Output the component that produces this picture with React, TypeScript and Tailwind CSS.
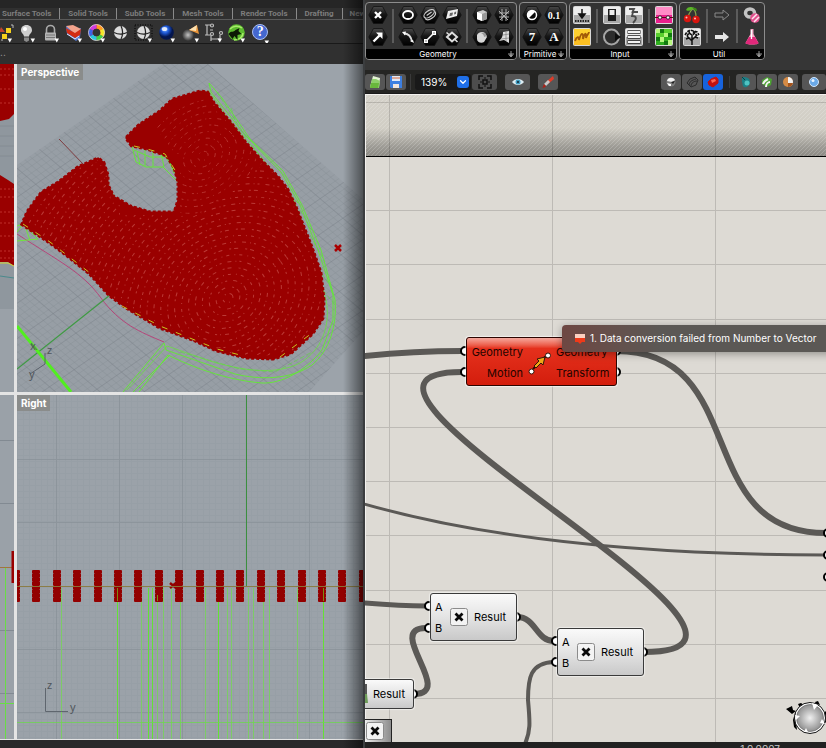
import type { ReactNode } from 'react';
import { ChevronDown } from 'lucide-react';

const tabs = [
  'Surface Tools',
  'Solid Tools',
  'SubD Tools',
  'Mesh Tools',
  'Render Tools',
  'Drafting',
  'New',
];

function Flyout() {
  return <path d="M14.500 16.500h4.500l-2.200 4z" fill="#fff" />;
}

const rhinoTools: { name: string; icon: ReactNode }[] = [
  {
    name: 'Group',
    icon: (
      <>
        <path d="M8 5l4 5H6z" fill="#c2452d" />
        <rect x="13" y="6" width="5" height="5" fill="#f7d21c" />
        <rect x="9" y="12" width="5" height="5" fill="#f7d21c" />
        <path d="M18 3h2v3M9 19v-2" stroke="#bbb" fill="none" />
      </>
    ),
  },
  {
    name: 'Hide objects',
    icon: (
      <>
        <path
          d="M10.500 3c3.600 0 5.500 2.500 5.500 5.200 0 2.700-2.800 3.600-3 6.300H8c-.2-2.700-3-3.600-3-6.300C5 5.500 7 3 10.500 3z"
          fill="#cfcfcf"
        />
        <circle cx="9" cy="7" r="2" fill="#fff" />
        <path d="M8 15.500h5v3l-2.500 1.500L8 18.500z" fill="#8c8c8c" />
      </>
    ),
  },
  {
    name: 'Lock objects',
    icon: (
      <>
        <path d="M6.500 11V7.500a4 4 0 018 0V11" fill="none" stroke="#aaa" strokeWidth="1.600" />
        <rect x="5" y="10.500" width="11" height="8" rx="1" fill="#b5b5b5" />
        <path d="M6 13h9M6 15.500h9" stroke="#777" />
      </>
    ),
  },
  {
    name: 'Layers',
    icon: (
      <>
        <path d="M3 4l8 4 7-2-1 10-4 3-9-7z" fill="#4f76cf" />
        <path d="M3 4l7-1 8 4-6 5z" fill="#f3a38c" />
        <path d="M3 6l9 5 6-4-1 6-5 3-8-5z" fill="#d22b12" />
        <path d="M4 12l8 5 4-3" fill="none" stroke="#dfe6f7" />
      </>
    ),
  },
  {
    name: 'Object properties',
    icon: (
      <g fill="none" strokeWidth="4">
        <circle cx="10.500" cy="10.500" r="6" stroke="#e33" />
        <path d="M10.500 4.500a6 6 0 015.200 3" stroke="#ff9a1f" />
        <path d="M15.700 7.500a6 6 0 010 6" stroke="#f4e628" />
        <path d="M15.700 13.500a6 6 0 01-5.200 3" stroke="#3fd244" />
        <path d="M10.500 16.500a6 6 0 01-5.200-3" stroke="#29c8e0" />
        <path d="M5.300 13.500a6 6 0 010-6" stroke="#3b62e8" />
        <path d="M5.300 7.500a6 6 0 015.200-3" stroke="#cf3ae0" />
        <circle cx="10.500" cy="10.500" r="8" stroke="#e8e8e8" strokeWidth="0.700" />
      </g>
    ),
  },
  {
    name: 'Shade',
    icon: (
      <>
        <circle cx="10.500" cy="10.500" r="6.500" fill="#dcdcdc" />
        <path d="M11 4c2 4 2 9 0 13M4 10.500c4 2 9 2 13 0" stroke="#222" fill="none" strokeWidth="1.200" />
      </>
    ),
  },
  {
    name: 'Shade selected',
    icon: (
      <>
        <path d="M2 3h17v15H2z" stroke="#111" strokeDasharray="1 1.500" strokeWidth="1.500" fill="none" />
        <circle cx="10.500" cy="10.500" r="6.500" fill="#dcdcdc" />
        <path d="M11 4c2 4 2 9 0 13M4 10.500c4 2 9 2 13 0" stroke="#222" fill="none" strokeWidth="1.200" />
      </>
    ),
  },
  {
    name: 'Render',
    icon: (
      <>
        <circle cx="10.500" cy="10.500" r="7.300" fill="url(#blueBall)" />
        <ellipse cx="8.500" cy="7" rx="2.800" ry="2" fill="#fff" opacity=".8" />
      </>
    ),
  },
  {
    name: 'Spotlight',
    icon: (
      <>
        <circle cx="8" cy="13" r="6" fill="url(#spotGlow)" />
        <path d="M9 8l8-5 2 9z" fill="#e9953a" />
        <path d="M9 8l8-5-1 6z" fill="#fbe0b0" />
      </>
    ),
  },
  {
    name: 'Dimension',
    icon: (
      <g fill="none" stroke="#bdbdbd" strokeWidth="1.200">
        <path d="M4 3v10M2 3h5M2 13h5M7 8h3M8 13v6M8 17h9M17 13v6" />
        <circle cx="9" cy="3.500" r="1.500" />
        <circle cx="9" cy="12" r="1.500" />
        <circle cx="18" cy="11" r="1.500" />
      </g>
    ),
  },
  {
    name: 'Grasshopper',
    icon: (
      <>
        <circle cx="10.500" cy="10.500" r="8.300" fill="#5dbb2f" />
        <path d="M4 7c3-3 8-4 12-1M8 18c5 0 9-3 9-7" stroke="#a9ec6c" strokeWidth="1.500" fill="none" />
        <path d="M2.500 12c3-4 5-1 7-4l4-2-1 3 3 3-4 1v5l-3-4-2 3z" fill="#0c1a05" />
      </>
    ),
  },
];

const perspectiveBody =
  'M127 138L139 126 160 112 173 100 187 96 200 92 207 93 213 103 230 123 245 143 260 160 277 177 287 190 295 207 303 227 312 250 320 273 323 300 322 318 312 333 290 353 273 358 247 357 217 350 193 339 160 327 128 308 110 295 90 273 70 257 50 242 23 224 28 212 42 193 60 182 78 168 98 159 103 163 107 175 107 185 113 197 130 207 150 213 175 213 179 200 179 182 175 167 167 155 147 148 132 145Z';

const rings = Array.from({ length: 34 }, (_, i) => 5 + i * 7);
const upperRings = Array.from({ length: 9 }, (_, i) => 5 + i * 7);
const ringDashes = ['3 5 1 4', '2 3 4 7', '4 4 1 3 2 6'];
const bars = Array.from({ length: 18 }, (_, i) => 12 + Math.round(i * 20.4));
const strongDrops = [117, 148, 152, 218, 323];
const faintDrops = [61, 141, 157, 163, 171, 180, 205, 227, 231, 248, 253, 263, 269, 297];

function PerspectiveView() {
  return (
    <svg className="absolute inset-0 h-full w-full" aria-hidden="true">
      <defs>
        <pattern
          id="floor"
          width="6"
          height="6"
          patternUnits="userSpaceOnUse"
          patternTransform="matrix(.76 .65 -.82 .57 208 64)"
        >
          <path d="M0 0H6M0 0V6" stroke="#747b82" strokeWidth=".7" opacity=".5" />
        </pattern>
        <pattern
          id="floorMajor"
          width="30"
          height="30"
          patternUnits="userSpaceOnUse"
          patternTransform="matrix(.76 .65 -.82 .57 208 64)"
        >
          <path d="M0 0H30M0 0V30" stroke="#6a7178" strokeWidth=".8" opacity=".5" />
        </pattern>
        <clipPath id="body">
          <path d={perspectiveBody} />
        </clipPath>
        <clipPath id="upper">
          <path d="M127 90H250L262 165 200 215 180 213V160Z" />
        </clipPath>
        <clipPath id="lower">
          <path d="M17 150H120V215H200L262 165 340 160V370H17Z" />
        </clipPath>
      </defs>
      <g transform="translate(-17 -64)">
        <path d="M163 64H208L364 200V330L308 393H17V165Z" fill="#979ea5" />
        <path d="M163 64H208L364 200V330L308 393H17V165Z" fill="url(#floor)" />
        <path d="M163 64H208L364 200V330L308 393H17V165Z" fill="url(#floorMajor)" />
        <path d="M59 139L84 165" stroke="#7d3a3d" strokeWidth="1" />
        <path d="M17 234C60 262 82 272 101 298S140 332 164 342" stroke="#b6457a" fill="none" />
        <path d="M110 295L17 369" stroke="#3f9a43" strokeWidth="1.200" />
        <path d="M17 326L71 392" stroke="#52ef20" strokeWidth="3" />
        <path d="M23 224L38 239 17 241M17 226L23 224 17 232M26 229L30 240" stroke="#6ee83c" fill="none" />
        <g stroke="#65e63a" fill="none" strokeWidth="1">
          <path d="M209 83L211 92 245 135 281 172 300 205 318 250 333 295 333 320 322 350C305 372 280 384 262 383 225 380 190 366 168 355L139 392" />
          <path d="M209 83L222 98 250 139 283 171 302 205 321 250 335 300C337 325 330 350 312 365 290 380 260 380 235 374L166 350 164 343" />
          <path d="M208 90L228 118 262 158 294 200 312 250 326 300C331 325 322 350 300 363 275 376 240 370 210 361L167 346 127 390" opacity=".75" />
          <path d="M164 343L123 392M170 355L133 392" />
          <path d="M132 146L136 162 146 167 163 167 178 182M134 150L150 157H166L178 177M137 152L140 165M145 150V166M153 151V167M161 152L164 167M168 157L174 173" />
          <path d="M106 175L109 189 116 200M105 180L108 193" strokeWidth="1.500" />
        </g>
        <path
          d="M217 92L247 139M231 108L236 122M252 145L262 158M286 190L298 203M300 210L312 230M310 235L325 262M318 268L333 290M323 290L335 305M180 352L240 369 275 372 312 352"
          stroke="#62d24c"
          strokeDasharray="5 2"
          fill="none"
          opacity=".7"
        />
        <path d={perspectiveBody} fill="#9a0000" stroke="#9a0000" strokeWidth="3" />
        <g clipPath="url(#body)" fill="none" stroke="#c9524d" opacity=".7">
          <g clipPath="url(#lower)">
            {rings.map((r, i) => (
              <ellipse
                key={r}
                cx="228"
                cy="298"
                rx={r * 1.05}
                ry={r * 0.85}
                strokeWidth="1"
                strokeDasharray={ringDashes[i % 3]}
                transform="rotate(-35 228 298)"
              />
            ))}
          </g>
          <g clipPath="url(#upper)">
            {upperRings.map((r, i) => (
              <ellipse
                key={r}
                cx="203"
                cy="156"
                rx={r * 1.1}
                ry={r * 0.85}
                strokeWidth=".8"
                strokeDasharray={ringDashes[i % 3]}
                transform="rotate(-35 203 156)"
              />
            ))}
          </g>
        </g>
        <path d={perspectiveBody} fill="none" stroke="#9a0000" strokeWidth="5" strokeDasharray="3 2" />
        <path
          d="M23 224L50 242 90 273M122 306L160 326 217 349 240 355M280 357L312 333M134 146L147 149 165 154 178 175"
          stroke="#c6c81e"
          strokeDasharray="6 9"
          fill="none"
        />
        <path d="M335 245l6 6m0-6l-6 6" stroke="#a00" strokeWidth="2.500" />
        <path d="M31 343L37 350M45 353V364L30 374" stroke="#59606a" fill="none" />
        <g className="font-['Noto_Sans',sans-serif] text-[11px]" fill="#50565c">
          <text x="30" y="350">x</text>
          <text x="47" y="354">z</text>
          <text x="29" y="378">y</text>
        </g>
      </g>
    </svg>
  );
}

function RightView() {
  return (
    <svg className="absolute inset-0 h-full w-full" aria-hidden="true">
      <defs>
        <pattern id="fine" width="6" height="6" patternUnits="userSpaceOnUse">
          <path d="M0 .5H6M.5 0V6" stroke="#868f97" opacity=".2" />
        </pattern>
      </defs>
      <rect width="100%" height="100%" fill="url(#fine)" />
      <g transform="translate(-17 -395)">
        <path
          d="M56.500 395V748M119.500 395V748M182.500 395V748M309.500 395V748M17 459.500H900M17 522.500H900M17 649.500H900M17 712.500H900"
          stroke="#858d95"
          opacity=".6"
        />
        <path d="M246.500 395V586" stroke="#3c8f3f" />
        {strongDrops.map((x) => (
          <rect key={x} x={x} y="588" width="1" height="160" fill="#63e234" />
        ))}
        {faintDrops.map((x) => (
          <rect key={x} x={x} y="588" width="1" height="160" fill="#7ccb66" />
        ))}
        {bars.map((x) => (
          <g key={x}>
            <rect x={x} y="570" width="8" height="32" rx="1" fill="#930000" />
            <path
              d={`M${x} 573V600M${x + 8} 573V600`}
              stroke="#9ba2a9"
              strokeWidth="1"
              strokeDasharray="1 3"
              opacity=".7"
            />
          </g>
        ))}
        <path d="M117.500 588V601M157.500 595V601M323.500 588V601" stroke="#7b8a10" />
        <path d="M170 583l6 5m-6 0l6-5M174 586h4" stroke="#930000" strokeWidth="2.500" />
        <path d="M17 722.500H900" stroke="#69dd46" opacity=".7" />
        <path d="M17 586.500H900" stroke="#8a7a3c" opacity=".9" />
        <path d="M45.500 688V711.500H68" stroke="#5f666e" fill="none" />
        <g className="font-['Noto_Sans',sans-serif] text-[11px]" fill="#50565c">
          <text x="47" y="689">z</text>
          <text x="70" y="711">y</text>
        </g>
      </g>
    </svg>
  );
}

function ViewTitle({ children }: { children: ReactNode }) {
  return (
    <h2 className="absolute left-0 top-0 h-4 bg-[#8a8c8b] px-1 text-[10px] font-bold leading-4 text-white">
      {children}
    </h2>
  );
}

function RhinoWindow() {
  return (
    <section className="relative flex w-[365px] shrink-0 flex-col overflow-hidden border-r-2 border-[#3b3d3f] bg-[#2f2f2f]">
      <svg width="0" height="0" className="absolute">
        <defs>
          <radialGradient id="blueBall" cx=".4" cy=".3">
            <stop offset="0" stopColor="#7db2ff" />
            <stop offset=".5" stopColor="#1d58d6" />
            <stop offset="1" stopColor="#04164e" />
          </radialGradient>
          <radialGradient id="spotGlow">
            <stop offset="0" stopColor="#c4c4c4" />
            <stop offset="1" stopColor="#c4c4c4" stopOpacity="0" />
          </radialGradient>
          <linearGradient id="hexFill" x1="0" y1="0" x2="0" y2="1">
            <stop offset="0" stopColor="#4a4a4a" />
            <stop offset=".45" stopColor="#161616" />
            <stop offset="1" stopColor="#000" />
          </linearGradient>
        </defs>
      </svg>
      <div className="h-2 bg-[#262626]" />
      <nav className="flex h-3 overflow-hidden border-b border-[#5a5a5a] bg-[#303030] font-['Roboto','Liberation_Sans',sans-serif]">
        {tabs.map((tab) => (
          <button
            key={tab}
            className="whitespace-nowrap border-r border-[#8a8a8a] px-2 text-[8px] font-bold leading-[10px] text-[#7d7d7d] first:pl-[2px] last:border-r-0 last:px-[7px]"
          >
            {tab}
          </button>
        ))}
      </nav>
      <div className="h-6 overflow-hidden border-b border-[#191919] bg-[#323232]">
        <div className="-ml-2 grid h-6 w-[280px] grid-cols-12 items-center">
          {rhinoTools.map((tool) => (
            <button key={tool.name} aria-label={tool.name} className="flex justify-center">
              <svg className="h-[21px] w-[21px] shrink-0" viewBox="0 0 21 21">
                {tool.icon}
                {tool.name !== 'Shade' && <Flyout />}
              </svg>
            </button>
          ))}
          <button aria-label="Help" className="relative flex justify-center">
            <span className="h-4 w-4 rounded-full border border-[#a9bdf2] bg-[#4467cf] font-['Liberation_Serif',serif] text-sm font-bold leading-[14px] text-white">
              ?
            </span>
            <svg className="absolute h-[21px] w-[21px]" viewBox="0 0 21 21">
              <Flyout />
            </svg>
          </button>
        </div>
      </div>
      <div className="h-5 bg-[#303030] text-[10px] leading-4 text-[#999]">..</div>
      <div className="grid min-h-0 flex-1 grid-cols-[14px_1fr] grid-rows-[328fr_345fr] gap-[3px] border-b border-[#e4e4e4] bg-[#e4e4e4]">
        <div className="relative overflow-hidden bg-[#9aa1a8]">
          <svg className="absolute inset-0 h-full w-full" aria-hidden="true">
            <rect width="14" height="245" fill="#8f979e" />
            <path d="M0 62H14M0 72H14M0 82H14M0 92H14" stroke="#7f868d" opacity=".6" />
            <path d="M0 0H14V50L9 55 0 57Z" fill="#9a0000" />
            <path d="M0 111L8 116 14 120V202L8 198H0Z" fill="#9a0000" />
            <path
              d="M0 5H14M0 11H14M0 25H14M0 39H14M0 125H14M0 133H14M0 148H14M0 159H14M0 172H14M0 187H14M0 194H14"
              stroke="#d1433f"
              strokeDasharray="2 2"
              opacity=".7"
            />
            <path d="M0 199H8L14 202" stroke="#d6d532" fill="none" />
            <path d="M0 212L14 214" stroke="#4b8a8c" />
          </svg>
        </div>
        <div className="relative overflow-hidden bg-[#9ca3aa]">
          <PerspectiveView />
          <ViewTitle>Perspective</ViewTitle>
        </div>
        <div className="relative overflow-hidden bg-[#9aa1a8]">
          <svg className="absolute inset-0 h-full w-full" aria-hidden="true">
            <path d="M0 45.500H14M0 108.500H14M0 235.500H14M0 298.500H14" stroke="#828a92" />
            <path d="M5.500 172V400M0 308.500H14" stroke="#69dd46" />
            <path d="M0 172.500H14" stroke="#a0763c" />
            <path d="M13 156V188" stroke="#9a0000" strokeWidth="3" />
          </svg>
        </div>
        <div className="relative overflow-hidden bg-[#9ba2a9]">
          <RightView />
          <ViewTitle>Right</ViewTitle>
        </div>
      </div>
      <div className="h-2 bg-[#29292b]" />
      <div className="pointer-events-none absolute inset-y-0 right-0 w-5 bg-linear-to-r from-transparent to-black/50" />
    </section>
  );
}

function Hex({ children }: { children: ReactNode }) {
  return (
    <svg viewBox="0 0 20 20" className="h-5 w-5">
      <path
        d="M5.500 1.500h9L19.200 10l-4.700 8.500h-9L.8 10z"
        fill="url(#hexFill)"
        stroke="#111"
        strokeWidth=".8"
        strokeLinejoin="round"
      />
      {children}
    </svg>
  );
}

function Tile({ children, from = '#ededed', to = '#a8a8a8' }: { children: ReactNode; from?: string; to?: string }) {
  return (
    <svg viewBox="0 0 20 20" className="h-5 w-5">
      <rect x="1.500" y="1.500" width="17" height="17" rx="1" fill={to} stroke="#d8d8d8" />
      <rect x="2" y="2" width="16" height="8" fill={from} />
      {children}
    </svg>
  );
}

function Glyph({ children, size }: { children: string; size: string }) {
  return (
    <Hex>
      <text
        x="10"
        y="14"
        textAnchor="middle"
        fill="#fff"
        className={`font-['Liberation_Serif',serif] font-bold ${size}`}
      >
        {children}
      </text>
    </Hex>
  );
}

type Tool = { name: string; icon: ReactNode };

const ribbon: { title: string; sections: Tool[][][] }[] = [
  {
    title: 'Geometry',
    sections: [
      [
        [
          { name: 'Point', icon: <Hex><path d="M7 7l6 6m0-6l-6 6" stroke="#fff" strokeWidth="2.400" /></Hex> },
          { name: 'Vector', icon: <Hex><path d="M5.500 14.500l6-6" stroke="#fff" strokeWidth="2.400" /><path d="M8 5.500h6.500V12z" fill="#fff" /></Hex> },
        ],
      ],
      [
        [
          { name: 'Circle', icon: <Hex><ellipse cx="10" cy="10" rx="5" ry="4" fill="none" stroke="#fff" strokeWidth="1.800" /></Hex> },
          { name: 'Arc', icon: <Hex><path d="M6 6.500c5 0 7 3 8 8" fill="none" stroke="#ddd" strokeWidth="2" /><path d="M4 5l4-.5-1 4zM12 14l4 2-1-3z" fill="#fff" /></Hex> },
        ],
        [
          { name: 'Curve', icon: <Hex><g fill="none" stroke="#ccc" strokeWidth="1.200" transform="rotate(-35 10 10)"><ellipse cx="10" cy="8.500" rx="6" ry="3" /><path d="M4 10c0 5 12 5 12 0M7 8.500h6" /></g></Hex> },
          { name: 'Line', icon: <Hex><path d="M6 14l8-8" stroke="#fff" strokeWidth="1.600" /><path d="M4 12h4v4H4zM12 4h4v4h-4z" fill="#fff" /><path d="M5.500 13.500h1v1h-1zM13.500 5.500h1v1h-1z" fill="#000" /></Hex> },
        ],
        [
          { name: 'Plane', icon: <Hex><path d="M6 6l10-2-1 7-11 3z" fill="#eee" /><path d="M8 8l3-.6-.6 3-3 .8zM12.500 7l1.800-.4-.4 2.500-2 .5z" fill="#666" /></Hex> },
          { name: 'Rectangle', icon: <Hex><path d="M5 10l5-4.500L15 10l-5 4.500z" fill="none" stroke="#ddd" strokeWidth="2" /><path d="M4.500 5.500l3 2.500M12.500 12l3 3" stroke="#ddd" strokeWidth="1.600" /></Hex> },
        ],
      ],
      [
        [
          { name: 'Box', icon: <Hex><path d="M5 7l6-2 4 2v7l-5 2-5-2z" fill="#ccc" /><path d="M5 7l5 2v7l-5-2z" fill="#fff" /><path d="M10 9l5-2v7l-5 2z" fill="#999" /></Hex> },
          { name: 'Brep', icon: <Hex><path d="M5 8c1-3 6-4 8-2l2 4-3 5c-3 2-7 0-7-3z" fill="#d8d8d8" /><path d="M9 6c3-1 5 0 6 3l-3 1c0-2-1-3-3-4z" fill="#999" /></Hex> },
        ],
        [
          { name: 'Mesh', icon: <Hex><path d="M5 8h10M5 12h10M8 4v12M12 4v12M5 6l9 9M15 6l-9 9" stroke="#bbb" strokeWidth=".9" /></Hex> },
          { name: 'Surface', icon: <Hex><path d="M9 5l6-1v12l-5-3-5 1c2-2 4-4 4-9z" fill="#ddd" /><path d="M12 5v9M7 12l8-1M9 8l6-1" stroke="#888" strokeWidth=".8" /></Hex> },
        ],
      ],
    ],
  },
  {
    title: 'Primitive',
    sections: [
      [
        [
          { name: 'Boolean', icon: <Hex><circle cx="10" cy="10" r="4.500" fill="#0a0a0a" stroke="#fff" strokeWidth="1.500" /><path d="M6.500 13.500a5 5 0 017-7z" fill="#fff" /></Hex> },
          { name: 'Integer', icon: <Glyph size="text-[13px]">7</Glyph> },
        ],
        [
          { name: 'Number', icon: <Glyph size="text-[10px]">0.1</Glyph> },
          { name: 'Text', icon: <Glyph size="text-[13px]">A</Glyph> },
        ],
      ],
    ],
  },
  {
    title: 'Input',
    sections: [
      [
        [
          { name: 'Button', icon: <Tile><path d="M10 4v6M7 9h6l-3 4z" stroke="#111" strokeWidth="1.500" fill="#111" /><path d="M3 16h14" stroke="#222" strokeWidth="2" strokeDasharray="1.500 1" /></Tile> },
          { name: 'Gradient', icon: <Tile from="#ffd02f" to="#fbbf22"><path d="M3 14c2-5 4-5 4-1 1-4 3-8 4-5v4c1-4 3-7 3-4v3c1-3 3-5 3-6" fill="none" stroke="#a35a08" strokeWidth="1.800" /></Tile> },
        ],
      ],
      [
        [
          { name: 'Toggle', icon: <Tile><rect x="6" y="4" width="8" height="12" fill="#1d1d1d" /><rect x="7.500" y="5" width="5" height="5" fill="#eee" /></Tile> },
          { name: 'Knob', icon: <svg viewBox="0 0 20 20" className="h-5 w-5"><circle cx="9.500" cy="10" r="7.500" fill="#2c2c2c" stroke="#a5a5a5" strokeWidth="2" /><path d="M13 6l6 4-6 4z" fill="#0c0c0c" /></svg> },
        ],
        [
          { name: 'Digit scroller', icon: <Tile><path d="M5 4h5l-2 4M14 7H9l-1 4c5 0 5 3 1 7" fill="none" stroke="#4a4a4a" strokeWidth="1.800" /></Tile> },
          { name: 'Value list', icon: <Tile><path d="M3.500 5h13M3.500 10h13M3.500 15h13" stroke="#222" strokeWidth="3.500" /><path d="M4 5h12M4 10h12M4 15h12" stroke="#f2f2f2" strokeWidth="1.800" /></Tile> },
        ],
      ],
      [
        [
          { name: 'Graph mapper', icon: <Tile from="#ff8cc6" to="#e81e8c"><path d="M1 12.500h18" stroke="#511" /><circle cx="6" cy="12.500" r="1.700" fill="#fff" stroke="#111" strokeWidth=".8" /><circle cx="14" cy="12.500" r="1.700" fill="#fff" stroke="#111" strokeWidth=".8" /></Tile> },
          { name: 'Image sampler', icon: <Tile from="#58cf2e" to="#2fae1e"><path d="M2 2h4v4H2zM10 6h4v4h-4zM6 10h4v5H6zM14 13h4v5h-4z" fill="#b6f77e" /><path d="M6 2h4v4H6zM14 6h4v4h-4zM10 14h4v4h-4zM2 10h4v4H2z" fill="#127a10" /></Tile> },
        ],
      ],
    ],
  },
  {
    title: 'Util',
    sections: [
      [
        [
          { name: 'Cherry picker', icon: <svg viewBox="0 0 20 20" className="h-5 w-5"><path d="M6 12C7 8 9 5 12 3M14 12c0-4-1-7-3-8" stroke="#88a04a" fill="none" strokeWidth="1.300" /><path d="M4 5c2-4 6-3 8-2-2 2-5 4-8 2z" fill="#59b427" /><path d="M11 3c3-1 4 1 4 3-2 0-4-1-4-3z" fill="#3b8a17" /><circle cx="5.500" cy="13.500" r="3.700" fill="#d8150f" /><circle cx="14" cy="14.500" r="3.700" fill="#d8150f" /><circle cx="4.500" cy="12.500" r="1" fill="#fbb" /><circle cx="13" cy="13.500" r="1" fill="#fbb" /></svg> },
          { name: 'Param viewer', icon: <Tile><path d="M10 18V8M10 14L5 9M10 13l5-5M7 11l-3 1M13 10l3 1" stroke="#111" strokeWidth="1.500" /><path d="M3 8l2-3 3-2 4 1 3 1 2 3M5 9l2-3 3 2 3-2 2 3M7 4l1 4M12 4l-1 4" fill="none" stroke="#111" strokeWidth="1.600" strokeDasharray="3 1" /></Tile> },
        ],
      ],
      [
        [
          { name: 'Relay', icon: <svg viewBox="0 0 20 20" className="h-5 w-5"><path d="M3 8h8V5l6 5-6 5v-3H3z" fill="#333" stroke="#8a8a8a" /></svg> },
          { name: 'Jump', icon: <svg viewBox="0 0 20 20" className="h-5 w-5"><path d="M3 8h8V5l6 5-6 5v-3H3z" fill="#e6e6e6" /></svg> },
        ],
      ],
      [
        [
          { name: 'Data dam', icon: <svg viewBox="0 0 20 20" className="h-5 w-5"><ellipse cx="8" cy="8" rx="4.500" ry="4" fill="none" stroke="#c4c4c4" strokeWidth="3.500" /><circle cx="13" cy="13" r="4.800" fill="#e2528f" /><path d="M10 14l5-5M12 17l5-5" stroke="#ffe6ef" strokeWidth="1.500" /></svg> },
          { name: 'Galapagos', icon: <svg viewBox="0 0 20 20" className="h-5 w-5"><path d="M8.500 2h3v5l5 9c0 2-13 2-13 0l5-9z" fill="#f7a3c3" /><path d="M7 10h6l3.500 6c0 2-13 2-13 0z" fill="#e0287a" /><path d="M9.500 3v9" stroke="#fff" strokeWidth="1.300" /></svg> },
        ],
      ],
    ],
  },
];

function Ribbon() {
  return (
    <div className="flex gap-[2px] bg-[#363636] pb-[10px] pt-[2px]">
      {ribbon.map((group) => (
        <div key={group.title} className="flex flex-col overflow-hidden rounded-sm border border-[#8d8d8d] bg-[#333]">
          <div className="flex gap-[2px] px-[2px] py-[2px]">
            {group.sections.map((columns, i) => (
              <div key={i} className="flex gap-[2px]">
                {i > 0 && <div className="mx-[2px] my-1 w-[2px] bg-[#5c5c5c]" />}
                {columns.map((column) => (
                  <div key={column[0].name} className="flex flex-col gap-[2px]">
                    {column.map((tool) => (
                      <button key={tool.name} aria-label={tool.name} className="h-5 w-5">
                        {tool.icon}
                      </button>
                    ))}
                  </div>
                ))}
              </div>
            ))}
          </div>
          <div className="flex items-center justify-between bg-black px-[2px] text-[8px] leading-[10px] text-white">
            <span className="flex-1 text-center">{group.title}</span>
            <svg viewBox="0 0 6 6" className="h-[6px] w-[6px]" aria-hidden="true">
              <path d="M3 0v5M0 3h6M1.500 4h3L3 6z" stroke="#999" fill="#999" />
            </svg>
          </div>
        </div>
      ))}
    </div>
  );
}

function BarButton({ label, className = '', children }: { label: string; className?: string; children: ReactNode }) {
  return (
    <button
      aria-label={label}
      className={`flex h-4 items-center justify-center rounded-[3px] ${className || 'w-5 bg-[#565656]'}`}
    >
      <svg viewBox="0 0 14 14" className="h-[14px] w-[14px]">
        {children}
      </svg>
    </button>
  );
}

function CanvasToolbar() {
  return (
    <div className="flex h-6 items-center gap-px border-b border-[#1a1a1a] bg-[#252523]">
      <BarButton label="Open file">
        <path d="M5 1l7 2-1 9H2z" fill="#e4f3d2" />
        <path d="M4 4h4l4 2-1 7H2z" fill="#8ed06a" />
        <path d="M3 8h8l-1 5H2z" fill="#69b83c" />
      </BarButton>
      <BarButton label="Save file">
        <path d="M1 1h12v12H2l-1-1z" fill="#3d7fe0" />
        <path d="M3 1h8v5H3z" fill="#dfe9f8" />
        <path d="M4 9h6v4H4z" fill="#f1e5dc" />
        <path d="M3 3h8" stroke="#d86a3c" />
      </BarButton>
      <div className="mx-[3px] h-4 w-px bg-[#3a3a3a]" />
      <div className="relative flex h-4 w-14 items-center">
        <select
          aria-label="Zoom level"
          defaultValue="139"
          className="h-4 w-full appearance-none rounded-[3px] bg-[#191919] pl-[6px] text-[10px] leading-4 text-white"
        >
          <option value="139">139%</option>
          <option value="100">100%</option>
        </select>
        <span className="pointer-events-none absolute right-[2px] flex h-3 w-3 items-center justify-center rounded-[3px] bg-[#1f6fe8]">
          <ChevronDown className="h-[10px] w-[10px] text-white" strokeWidth={3} />
        </span>
      </div>
      <BarButton label="Zoom extents" className="w-[25px] bg-[#4d4d4d]">
        <path d="M1 5V1h4M9 1h4v4M13 9v4H9M5 13H1V9" fill="none" stroke="#111" strokeWidth="1.500" />
        <path d="M5 5h4v4H5z" fill="none" stroke="#111" strokeWidth="1.500" />
        <path d="M7 2v2M7 10v2M2 7h2M10 7h2" stroke="#111" />
      </BarButton>
      <BarButton label="Named views" className="ml-[7px] w-[25px] bg-[#565656]">
        <path d="M1 7c3-4 9-4 12 0-3 4-9 4-12 0z" fill="#dcecf2" />
        <circle cx="7" cy="7" r="2.500" fill="#3e9cc0" />
        <circle cx="7" cy="7" r="1" fill="#123" />
      </BarButton>
      <BarButton label="Sketch" className="ml-[7px] w-5 bg-[#565656]">
        <path d="M12 1l1 3-6 5-2-2z" fill="#e23c28" />
        <path d="M7 5l2 2-4 4-2-2z" fill="#c9c9c9" />
        <path d="M3 9l2 2c-1 2-3 2-4 1 2 0 1-2 2-3z" fill="#b02016" />
      </BarButton>
      <div className="flex-1" />
      <BarButton label="No preview">
        <circle cx="7" cy="7" r="4.500" fill="#7d7d7d" />
        <path d="M3 6c1-4 6-4 8-1L8 7z" fill="#f2f2f2" />
        <path d="M3 8l4 1v2H5z" fill="#fff" />
        <path d="M7 7l4-1-2 3z" fill="#222" />
      </BarButton>
      <BarButton label="Wireframe preview">
        <path d="M2 8l3-4 5-2 3 3-2 5-5 2z" fill="none" stroke="#2b2b2b" />
        <path d="M4 10c0-3 3-5 7-6M6 11c0-3 3-5 6-5" stroke="#2b2b2b" fill="none" />
      </BarButton>
      <BarButton label="Shaded preview" className="w-5 bg-[#1763dc]">
        <path d="M2 7l3-3 5-2 2 2v4l-5 4-4-2z" fill="#c3120f" strokeLinejoin="round" stroke="#c3120f" />
        <path d="M5 5l4-1 1 2-4 2z" fill="#ff6a55" />
      </BarButton>
      <div className="mx-[5px] h-3 w-px bg-[#3c3c3c]" />
      <BarButton label="Only draw selected">
        <path d="M3 2c5 0 8 1 8 5s-4 6-6 5-1-3-2-5z" fill="#1c7f86" />
        <circle cx="8" cy="8" r="2.500" fill="#4fc3c3" />
        <path d="M3 2l3 3" stroke="#0b4044" />
      </BarButton>
      <BarButton label="Document preview">
        <path d="M2 5l5-3 5 2-1 6-4 2-5-3z" fill="#4ca332" />
        <path d="M3 9c1-3 3-4 5-5M6 12c0-3 2-5 4-5" stroke="#f4f4f4" strokeWidth="2" fill="none" />
      </BarButton>
      <BarButton label="Preview mesh">
        <circle cx="7" cy="7" r="5" fill="#d68b45" />
        <path d="M7 2a5 5 0 010 10z" fill="#f2f2f2" />
        <path d="M7 8h5a5 5 0 01-5 4z" fill="#a5541c" />
      </BarButton>
      <BarButton label="Preview quality" className="ml-[3px] w-6 bg-[#565656]">
        <circle cx="7" cy="7" r="4.500" fill="#6aa9e8" stroke="#d3e6fa" />
        <circle cx="6" cy="5.500" r="1.500" fill="#e8f4ff" />
      </BarButton>
    </div>
  );
}

const wires = [
  { d: 'M0 356C40 352 70 351 98 351', w: 6 },
  { d: 'M98 372C-90 372 476 652 280 652', w: 6 },
  { d: 'M252 351C388 351 326 533 462 533', w: 6 },
  { d: 'M0 504C120 538 280 555 462 555', w: 3 },
  { d: 'M0 603C25 605 40 606 62 606', w: 5 },
  { d: 'M50 694C92 694 20 628 62 628', w: 6 },
  { d: 'M153 617C172 617 172 641 190 641', w: 6 },
  { d: 'M190 662C166 663 164 678 164 700 166 722 167 732 160 746', w: 4 },
];

const ports = [
  [101, 351], [101, 372], [252, 351], [252, 372],
  [65, 606], [65, 628], [152, 617],
  [192, 641], [192, 662], [279, 652],
  [49, 694], [464, 533], [464, 555], [464, 577],
];

const nodeBox =
  'absolute rounded-[3px] border border-[#3a3a3a] bg-linear-to-b from-[#fafafa] via-[#e4e4e4] to-[#c9c9c9] text-[11px] text-black shadow-[0_0_1px_1px_rgba(255,255,255,0.5)]';

function MultiplyIcon() {
  return (
    <svg viewBox="0 0 20 20" className="h-5 w-5">
      <rect x="1.500" y="1.500" width="17" height="17" rx="2" fill="#f3f3f3" stroke="#8b8b8b" />
      <path d="M6.500 6.500l7 7m0-7l-7 7" stroke="#0a0a0a" strokeWidth="2.800" />
    </svg>
  );
}

function ResultNode({ place }: { place: string }) {
  return (
    <div className={`${nodeBox} ${place} flex h-[48px] w-[87px] items-center`}>
      <div className="flex w-4 flex-col gap-[5px] pl-1 leading-4">
        <span>A</span>
        <span>B</span>
      </div>
      <div className="flex w-6 justify-center">
        <MultiplyIcon />
      </div>
      <span className="ml-[3px]">Result</span>
    </div>
  );
}

function Canvas() {
  return (
    <main className="relative min-h-0 flex-1 overflow-hidden bg-[#dddad4]">
      <svg className="absolute inset-0 h-full w-full" aria-hidden="true">
        <defs>
          <pattern id="hatch" width="4" height="4" patternUnits="userSpaceOnUse">
            <path d="M-1 1L1 -1M0 4L4 0M3 5L5 3" stroke="#fff" strokeWidth="1" opacity=".18" />
          </pattern>
          <linearGradient id="topShade" x1="0" y1="0" x2="0" y2="1">
            <stop offset="0" stopColor="#d5d2ca" />
            <stop offset=".55" stopColor="#d1cec5" />
            <stop offset=".85" stopColor="#9d9b95" />
            <stop offset="1" stopColor="#8c8a84" />
          </linearGradient>
        </defs>
        <rect width="100%" height="62" fill="url(#topShade)" />
        <rect width="100%" height="62" fill="url(#hatch)" />
        <path
          d="M24.500 0V900M187.500 0V900M350.500 0V900M513.500 0V900M0 8.500H2000M0 116.500H2000M0 170.500H2000M0 225.500H2000M0 279.500H2000M0 333.500H2000M0 387.500H2000M0 441.500H2000M0 496.500H2000M0 550.500H2000M0 604.500H2000"
          stroke="#000"
          opacity=".14"
        />
        <path d="M0 62.500H2000" stroke="#000" />
        <path d="M0 .5H2000M.5 0V900" stroke="#f3f1ee" />
        {/* wires and ports are given in window coordinates, the canvas starts under the toolbars */}
        <g transform="translate(-1 -94)">
          {wires.map((wire) => (
            <path key={wire.d} d={wire.d} fill="none" stroke="#5b5956" strokeWidth={wire.w} />
          ))}
          {ports.map(([x, y]) => (
            <circle key={`${x}-${y}`} cx={x} cy={y} r="4" fill="#fff" stroke="#000" strokeWidth="2" />
          ))}
        </g>
      </svg>

      <div className="absolute left-[101px] top-[243px] h-[49px] w-[151px] rounded-[3px] border border-[#2c0500] bg-[#dd2311] bg-linear-to-b from-[#f4a79d] from-0% via-[#e5301c] via-22% to-[#d31d0c] text-[11px] leading-4 text-[#230400] shadow-[0_0_1px_1px_rgba(255,255,255,0.6)]">
        <div className="flex justify-between px-1 pt-[6px]">
          <div className="flex w-[52px] flex-col gap-[5px] text-right">
            <span>Geometry</span>
            <span>Motion</span>
          </div>
          <svg viewBox="0 0 24 24" className="mt-2 h-6 w-6">
            <path d="M5 17L18 4" stroke="#2a0b00" strokeWidth="2" strokeDasharray="3 2" />
            <path d="M6 14l5-5-2-2 8-2-2 8-2-2-5 5z" fill="#f0a818" stroke="#33150a" />
            <circle cx="3.500" cy="19.500" r="2.500" fill="#fff" stroke="#33150a" />
            <circle cx="20" cy="3.500" r="2.500" fill="#fff" stroke="#33150a" />
          </svg>
          <div className="flex w-[56px] flex-col gap-[5px]">
            <span>Geometry</span>
            <span>Transform</span>
          </div>
        </div>
      </div>

      <ResultNode place="left-[65px] top-[499px]" />
      <ResultNode place="left-[192px] top-[534px]" />
      <div className={`${nodeBox} -left-2 top-[585px] flex h-[30px] w-[57px] items-center justify-end pr-2`}>Result</div>
      <svg viewBox="0 0 4 24" className="absolute left-0 top-[588px] h-6 w-1" aria-hidden="true">
        <path d="M0 2h2v10H0z" fill="#555" />
        <path d="M0 12h2l1 9H0z" fill="#6d9c58" />
      </svg>
      <div className="absolute -left-px top-[625px] h-6 w-7 border border-[#222] bg-linear-to-r from-[#eee] to-[#8c8c8c] pt-px">
        <MultiplyIcon />
      </div>

      <div
        role="tooltip"
        className="absolute left-[197px] top-[231px] flex h-[27px] w-[280px] items-center gap-1 rounded-[4px] bg-[#5b5855] bg-linear-to-r from-[#6e4742] from-0% via-[#5b5855] via-35% to-[#5b5855] pl-3 text-[10px] text-white shadow-[0_2px_8px_rgba(0,0,0,0.35)]"
      >
        <svg viewBox="0 0 12 12" className="h-3 w-3 shrink-0" aria-hidden="true">
          <path d="M1 1h10v8H8l-2 2-2-2H1z" fill="#ee3a1a" />
          <path d="M1 1h10v4H1z" fill="#fbd0c0" />
        </svg>
        <span className="whitespace-nowrap">1. Data conversion failed from Number to Vector</span>
      </div>

      <svg viewBox="0 0 40 36" className="absolute bottom-[6px] right-0 h-9 w-10" aria-hidden="true">
        <path d="M0 9l6-3 1 4 3 1-4 3z" />
        <path d="M9 13l-2 7 1 7 3 3zM12 4l3-1 3 2-4 3zM29 2l3-1 2 4-4-1zM39 12l1-1v12l-1-1z" />
        <radialGradient id="dial">
          <stop offset="0" stopColor="#f0f0f0" />
          <stop offset="1" stopColor="#8f8f8f" />
        </radialGradient>
        <circle cx="24" cy="18" r="15.500" fill="#fff" stroke="#111" />
        <circle cx="24" cy="18" r="13.500" fill="url(#dial)" stroke="#666" strokeWidth=".7" />
        <path d="M26 3l6 2-4 5zM9 15l5 1-4 4zM18 32l2-4 2 4zM39 24l-5-1 2-4z" fill="#fff" />
      </svg>
    </main>
  );
}

export default function App() {
  return (
    <div className="flex h-screen min-h-[600px] overflow-hidden bg-[#252525] font-['Inter','Liberation_Sans',sans-serif]">
      <RhinoWindow />
      <section className="flex min-w-0 flex-1 flex-col">
        <Ribbon />
        <CanvasToolbar />
        <Canvas />
        <footer className="h-[6px] overflow-hidden bg-[#222] pr-[46px] pt-px text-right text-[10px] leading-[12px] text-[#c8c8c8]">
          1.0.0007
        </footer>
      </section>
    </div>
  );
}
